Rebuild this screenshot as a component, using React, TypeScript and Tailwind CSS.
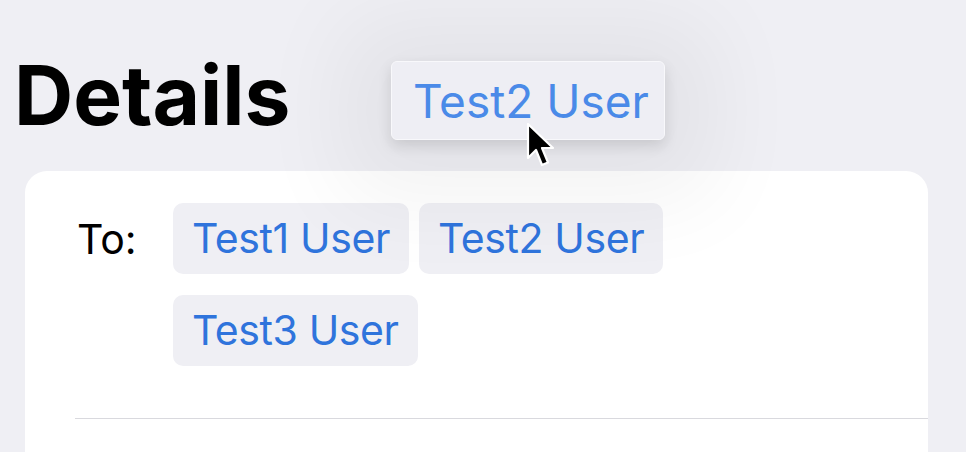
import React from 'react'

const FONT = { fontFamily: 'Inter, "Noto Sans", sans-serif' }

function Chip({ name }: { name: string }) {
  return (
    <div className="h-[71px] px-[19px] flex items-center rounded-[10px] bg-[#efeff4] text-[41px] text-[#2f74dc] leading-none tracking-[-0.4px]">
      {name}
    </div>
  )
}

function Cursor() {
  return (
    <svg width="30" height="48" viewBox="0 0 30 48" className="absolute left-[526px] top-[122px]">
      <path
        d="M2 2 L2 36 L10 28 L16 43 L22 40.5 L16 26 L27 26 Z"
        fill="#000"
        stroke="#fff"
        strokeWidth="2.2"
        strokeLinejoin="round"
      />
    </svg>
  )
}

export default function App() {
  const recipients = ['Test1 User', 'Test2 User', 'Test3 User']

  return (
    <div className="relative w-[966px] h-[452px] overflow-hidden bg-[#efeff4]" style={FONT}>
      <div className="pt-[55px] pl-[14px]">
        <h1 className="text-[82px] font-bold leading-none text-black tracking-[0px]">Details</h1>
      </div>

      <div className="mt-[34px] ml-[25px] w-[903px] h-[400px] rounded-[22px] bg-white">
        <div className="flex pt-[32px] pl-[52px]">
          <div className="w-[96px] pt-[16px] text-[41px] leading-none text-black">To:</div>
          <div className="flex flex-wrap gap-x-[10px] gap-y-[21px] w-[520px]">
            {recipients.map(r => (
              <Chip key={r} name={r} />
            ))}
          </div>
        </div>
        <div className="mt-[52px] ml-[50px] h-px bg-[#d9d9de]" />
      </div>

      {/* dragged chip */}
      <div className="absolute left-[391px] top-[61px] w-[274px] h-[79px] rounded-[6px] border border-[#f8f8fb] bg-[#eeeef4] flex items-center pl-[21px] text-[46px] leading-none text-[#4a8ae8] shadow-[0_6px_14px_rgba(0,0,0,0.12),0_10px_90px_50px_rgba(0,0,0,0.05)]">
        Test2 User
      </div>
      <Cursor />
    </div>
  )
}
